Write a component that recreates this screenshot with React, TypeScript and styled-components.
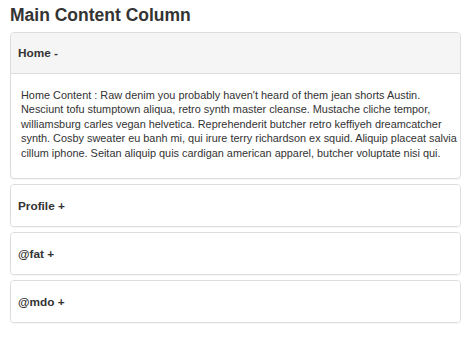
import React, { useState } from 'react';
import styled, { createGlobalStyle } from 'styled-components';

const GlobalStyle = createGlobalStyle`
  html, body {
    margin: 0;
    padding: 0;
    background: #fff;
  }
  body {
    font-family: 'Liberation Sans', Arial, sans-serif;
    color: #333;
  }
`;

const Page = styled.div`
  width: 474px;
  height: 338px;
  box-sizing: border-box;
  padding: 4px 13px 0 10px;
`;

const Title = styled.h2`
  margin: 0 0 5px;
  font-size: 17.5px;
  line-height: 23px;
  font-weight: bold;
  color: #333;
`;

const Accordion = styled.div`
  display: flex;
  flex-direction: column;
  gap: 5px;
`;

const Panel = styled.div`
  border: 1px solid #ddd;
  border-radius: 4px;
  background: #fff;
  box-shadow: 0 1px 1px rgba(0, 0, 0, 0.04);
  overflow: hidden;
`;

const PanelHeading = styled.div<{ $open: boolean }>`
  height: 41px;
  display: flex;
  align-items: center;
  padding: 0 7px;
  background: ${(p) => (p.$open ? '#f5f5f5' : '#fff')};
  border-bottom: ${(p) => (p.$open ? '1px solid #ddd' : 'none')};
  box-sizing: border-box;
  cursor: pointer;
  font-size: 11.8px;
  font-weight: bold;
  color: #333;
`;

const PanelBody = styled.div`
  padding: 14px 2px 18px 10px;
  font-size: 10.9px;
  line-height: 14.4px;
  color: #333;
`;

const items = [
  {
    title: 'Home',
    content:
      "Home Content : Raw denim you probably haven't heard of them jean shorts Austin. Nesciunt tofu stumptown aliqua, retro synth master cleanse. Mustache cliche tempor, williamsburg carles vegan helvetica. Reprehenderit butcher retro keffiyeh dreamcatcher synth. Cosby sweater eu banh mi, qui irure terry richardson ex squid. Aliquip placeat salvia cillum iphone. Seitan aliquip quis cardigan american apparel, butcher voluptate nisi qui.",
  },
  { title: 'Profile', content: 'Profile Content' },
  { title: '@fat', content: '@fat Content' },
  { title: '@mdo', content: '@mdo Content' },
];

const App: React.FC = () => {
  const [open, setOpen] = useState(0);

  return (
    <Page>
      <GlobalStyle />
      <Title>Main Content Column</Title>
      <Accordion>
        {items.map((item, i) => (
          <Panel key={item.title}>
            <PanelHeading $open={open === i} onClick={() => setOpen(open === i ? -1 : i)}>
              {item.title} {open === i ? '-' : '+'}
            </PanelHeading>
            {open === i && <PanelBody>{item.content}</PanelBody>}
          </Panel>
        ))}
      </Accordion>
    </Page>
  );
};

export default App;
